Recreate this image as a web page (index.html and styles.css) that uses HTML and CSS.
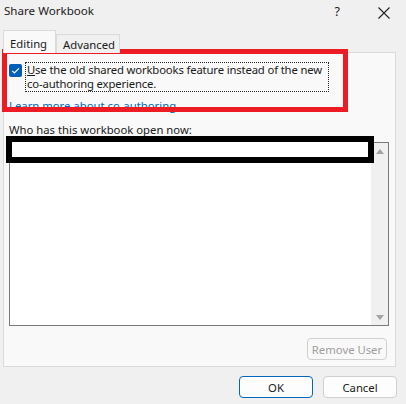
FILE: index.html
```html
<!DOCTYPE html>
<html>
<head>
<meta charset="utf-8">
<link rel="stylesheet" href="styles.css">
</head>
<body>
<div class="dialog">
  <div class="titlebar">
    <span class="title">Share Workbook</span>
    <span class="help">?</span>
    <svg class="close" width="12" height="12" viewBox="0 0 12 12"><path d="M0.5 0.5 L11.5 11.5 M11.5 0.5 L0.5 11.5" stroke="#222" stroke-width="1.1" fill="none"/></svg>
  </div>
  <div class="tabs">
    <div class="tab active">Editing</div>
    <div class="tab">Advanced</div>
  </div>
  <div class="panel">
    <div class="option">
      <span class="checkbox"><svg width="13" height="13" viewBox="0 0 13 13"><path d="M3.2 6.8 L5.4 9 L9.9 4.3" stroke="#fff" stroke-width="1.2" fill="none"/></svg></span>
      <span class="label">Use the old shared workbooks feature instead of the new co-authoring experience.</span>
    </div>
    <a class="link">Learn more about co-authoring</a>
    <div class="who">Who has this workbook open now:</div>
    <div class="listbox">
      <div class="list"></div>
      <div class="scrollbar">
        <span class="arrow up"></span>
        <span class="arrow down"></span>
      </div>
    </div>
    <div class="panel-actions">
      <button class="btn disabled">Remove User</button>
    </div>
  </div>
  <div class="footer">
    <button class="btn default">OK</button>
    <button class="btn">Cancel</button>
  </div>
  <div class="mark-red"></div>
  <div class="mark-black"></div>
</div>
</body>
</html>
```
FILE: styles.css
```css
* { box-sizing: border-box; }
html, body { margin: 0; padding: 0; }
body {
  width: 406px;
  height: 404px;
  background: #f0f0f0;
  font-family: "Noto Sans", "Open Sans", sans-serif;
  font-size: 11.3px;
  color: #1a1a1a;
  overflow: hidden;
}
.dialog {
  position: relative;
  width: 406px;
  height: 404px;
  display: flex;
  flex-direction: column;
}
.titlebar {
  height: 31px;
  display: flex;
  align-items: flex-start;
  padding: 2px 0 0 4px;
  line-height: 18px;
}
.title { font-size: 11.6px; flex: 1; }
.help { font-size: 12.5px; margin-right: 38px; margin-top: 1px; }
.close { margin-right: 16px; margin-top: 5px; }
.tabs {
  display: flex;
  align-items: flex-end;
  margin-left: 3px;
  height: 22px;
  position: relative;
  z-index: 1;
  margin-bottom: -1px;
}
.tab {
  height: 19px;
  padding: 2px 6px 0 6px;
  border: 1px solid #dadada;
  border-bottom: none;
  background: #f0f0f0;
  line-height: 16px;
  width: 64px;
}
.tab.active {
  height: 23px;
  width: 53px;
  background: #f9f9f9;
  padding-top: 5px;
  padding-left: 6px;
}
.panel {
  margin: 0 10px 0 3px;
  height: 315px;
  background: #f9f9f9;
  border: 1px solid #dadada;
  padding: 9px 6px 0 5px;
  display: flex;
  flex-direction: column;
}
.option {
  display: flex;
  align-items: flex-start;
}
.checkbox {
  width: 13px;
  height: 13px;
  margin-top: 2px;
  background: #005fb8;
  border-radius: 2px;
  display: block;
  flex: none;
}
.checkbox svg { display: block; }
.label {
  margin-left: 3px;
  width: 304px;
  border: 1px dotted #222;
  padding: 0 0 0 1px;
  line-height: 14px;
  height: 30px;
  letter-spacing: -0.15px;
}
.label::first-letter { text-decoration: underline; }
.link {
  color: #0067c0;
  margin-top: 7px;
  line-height: 14px;
}
.who {
  margin-top: 10px;
  line-height: 14px;
}
.listbox {
  margin-top: 5px;
  width: 380px;
  height: 184px;
  border: 1px solid #7a7a7a;
  background: #fff;
  display: flex;
}
.list { flex: 1; }
.scrollbar {
  width: 17px;
  background: #f0f0f0;
  display: flex;
  flex-direction: column;
  justify-content: space-between;
  align-items: center;
  padding: 6px 0 5px 0;
}
.arrow {
  width: 0; height: 0;
  border-left: 4px solid transparent;
  border-right: 4px solid transparent;
}
.arrow.up { border-bottom: 5px solid #a3a3a3; }
.arrow.down { border-top: 5px solid #a3a3a3; }
.panel-actions {
  display: flex;
  justify-content: flex-end;
  margin-top: 12px;
  padding-right: 2px;
}
.btn {
  font-family: inherit;
  font-size: 11.3px;
  height: 22px;
  padding: 0;
  background: #fdfdfd;
  border: 1px solid #d0d0d0;
  border-radius: 4px;
  color: #1a1a1a;
  width: 74px;
}
.btn.disabled {
  width: 80px;
  color: #9d9d9d;
  background: #f9f9f9;
}
.btn.default {
  border-color: #0067c0;
  box-shadow: inset 0 0 0 1px #fff;
}
.footer {
  display: flex;
  justify-content: flex-end;
  gap: 10px;
  padding: 9px 9px 0 0;
}
.mark-red {
  position: absolute;
  left: 2px;
  top: 49px;
  width: 346px;
  height: 63px;
  border: 5px solid #ed1c24;
}
.mark-black {
  position: absolute;
  left: 6px;
  top: 136px;
  width: 368px;
  height: 27px;
  border: 6px solid #000;
  background: #fff;
}
```
